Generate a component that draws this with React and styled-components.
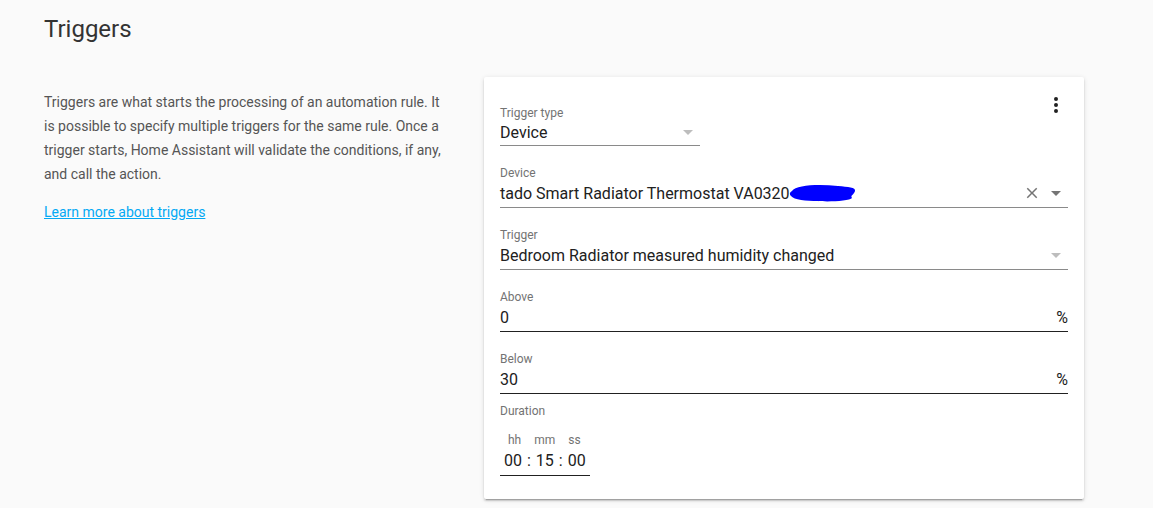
import React from 'react';
import styled, { createGlobalStyle } from 'styled-components';

const GlobalStyle = createGlobalStyle`
  body {
    margin: 0;
    background: #fafafa;
    font-family: Roboto, "Noto Sans", sans-serif;
  }
`;

const Page = styled.div`
  padding: 13px 44px 0;
  min-height: 508px;
  box-sizing: border-box;
`;

const Title = styled.h1`
  margin: 0;
  font-size: 24px;
  line-height: 32px;
  font-weight: 400;
  color: #333;
`;

const Row = styled.div`
  display: flex;
  align-items: flex-start;
  margin-top: 32px;
  gap: 40px;
`;

const Intro = styled.div`
  width: 400px;
  padding-top: 13px;
  font-size: 14px;
  line-height: 24px;
  color: #555;

  p {
    margin: 0 0 14px;
  }

  a {
    color: #03a9f4;
    text-decoration: underline;
  }
`;

const Card = styled.div`
  position: relative;
  width: 600px;
  box-sizing: border-box;
  background: #fff;
  border-radius: 2px;
  box-shadow: 0 2px 2px 0 rgba(0, 0, 0, 0.14), 0 1px 5px 0 rgba(0, 0, 0, 0.12),
    0 3px 1px -2px rgba(0, 0, 0, 0.2);
  padding: 28px 16px 23px;
  display: flex;
  flex-direction: column;
  gap: 19px;
`;

const MenuButton = styled.div`
  position: absolute;
  top: 16px;
  right: 16px;
  width: 24px;
  height: 24px;
  color: #212121;
`;

const Field = styled.div`
  width: ${(p) => p.width || '100%'};
  padding-bottom: 2px;
  border-bottom: 1px solid ${(p) => (p.dim ? '#8a8a8a' : '#212121')};
`;

const Label = styled.div`
  font-size: 12px;
  line-height: 16px;
  color: #737373;
`;

const ValueRow = styled.div`
  display: flex;
  align-items: center;
  height: ${(p) => (p.compact ? 22 : 24)}px;
  font-size: 16px;
  color: #212121;
`;

const Value = styled.span`
  flex: 1;
  display: flex;
  align-items: center;
  white-space: nowrap;
`;

const Arrow = styled.span`
  width: 0;
  height: 0;
  border-left: 5px solid transparent;
  border-right: 5px solid transparent;
  border-top: 5px solid ${(p) => (p.light ? '#bdbdbd' : '#757575')};
  margin-right: 7px;
`;

const Suffix = styled.span`
  font-size: 16px;
  color: #212121;
`;

const ClearIcon = styled.svg`
  width: 18px;
  height: 18px;
  color: #757575;
  margin-right: 10px;
`;

const Blob = styled.svg`
  width: 70px;
  height: 20px;
  margin-left: -2px;
`;

const Duration = styled.div`
  margin-top: -10px;
`;

const TimeBox = styled.div`
  width: 90px;
  margin-top: 14px;
  border-bottom: 1px solid #212121;
  padding-bottom: 2px;
`;

const Units = styled.div`
  display: flex;
  font-size: 12px;
  line-height: 14px;
  color: #737373;
  padding-left: 8px;
  gap: 13px;
`;

const Times = styled.div`
  display: flex;
  align-items: center;
  margin-top: 2px;
  font-size: 16px;
  line-height: 24px;
  color: #212121;
  padding-left: 4px;
  gap: 5px;
`;

const dots = (
  <svg viewBox="0 0 24 24" width="24" height="24">
    <path
      fill="currentColor"
      d="M12,16A2,2 0 0,1 14,18A2,2 0 0,1 12,20A2,2 0 0,1 10,18A2,2 0 0,1 12,16M12,10A2,2 0 0,1 14,12A2,2 0 0,1 12,14A2,2 0 0,1 10,12A2,2 0 0,1 12,10M12,4A2,2 0 0,1 14,6A2,2 0 0,1 12,8A2,2 0 0,1 10,6A2,2 0 0,1 12,4Z"
    />
  </svg>
);

export default function App() {
  return (
    <Page>
      <GlobalStyle />
      <Title>Triggers</Title>
      <Row>
        <Intro>
          <p>
            Triggers are what starts the processing of an automation rule. It is possible to
            specify multiple triggers for the same rule. Once a trigger starts, Home Assistant
            will validate the conditions, if any, and call the action.
          </p>
          <a href="#">Learn more about triggers</a>
        </Intro>
        <Card>
          <MenuButton>{dots}</MenuButton>
          <Field width="200px" dim>
            <Label>Trigger type</Label>
            <ValueRow compact>
              <Value>Device</Value>
              <Arrow light />
            </ValueRow>
          </Field>
          <Field dim>
            <Label>Device</Label>
            <ValueRow>
              <Value>
                tado Smart Radiator Thermostat VA0320
                <Blob viewBox="0 0 70 20">
                  <path
                    fill="#0000ff"
                    d="M4,8 C8,2 30,1 50,3 C60,4 68,4 67,8 C66,12 62,12 64,15 C62,18 40,19 30,18 C18,18 6,17 3,13 C1,11 2,9 4,8Z"
                  />
                </Blob>
              </Value>
              <ClearIcon viewBox="0 0 24 24">
                <path
                  fill="currentColor"
                  d="M19,6.41L17.59,5L12,10.59L6.41,5L5,6.41L10.59,12L5,17.59L6.41,19L12,13.41L17.59,19L19,17.59L13.41,12L19,6.41Z"
                />
              </ClearIcon>
              <Arrow />
            </ValueRow>
          </Field>
          <Field dim>
            <Label>Trigger</Label>
            <ValueRow>
              <Value>Bedroom Radiator measured humidity changed</Value>
              <Arrow light />
            </ValueRow>
          </Field>
          <Field>
            <Label>Above</Label>
            <ValueRow>
              <Value>0</Value>
              <Suffix>%</Suffix>
            </ValueRow>
          </Field>
          <Field>
            <Label>Below</Label>
            <ValueRow>
              <Value>30</Value>
              <Suffix>%</Suffix>
            </ValueRow>
          </Field>
          <Duration>
            <Label>Duration</Label>
            <TimeBox>
              <Units>
                <span>hh</span>
                <span>mm</span>
                <span>ss</span>
              </Units>
              <Times>
                <span>00</span>
                <span>:</span>
                <span>15</span>
                <span>:</span>
                <span>00</span>
              </Times>
            </TimeBox>
          </Duration>
        </Card>
      </Row>
    </Page>
  );
}
